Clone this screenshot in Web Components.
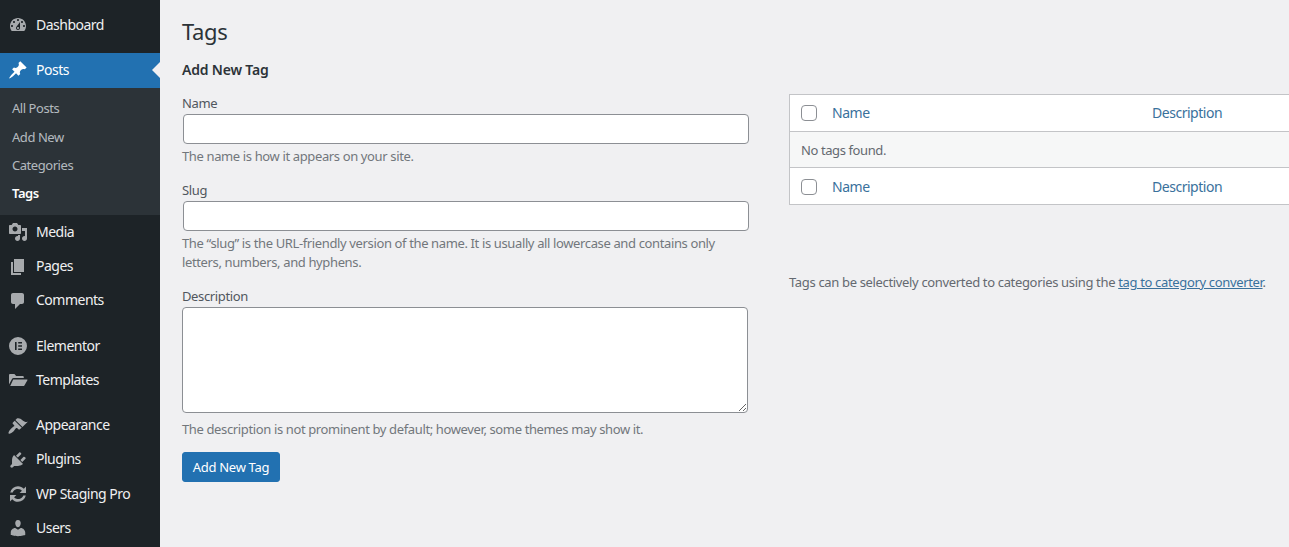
<!DOCTYPE html>
<html>
<head>
<meta charset="utf-8">
<title>Tags</title>
<style>
html, body { margin: 0; height: 100%; overflow: hidden; background: #f0f0f2; }
body { font-family: "Noto Sans", "Open Sans", sans-serif; font-size: 13px; color: #3c434a; }
#wrap { display: flex; height: 547px; overflow: hidden; }
</style>
</head>
<body>
<div id="wrap">
  <wp-sidebar>
    <wp-menu-item icon="dashboard">Dashboard</wp-menu-item>
    <wp-menu-sep></wp-menu-sep>
    <wp-menu-item icon="post" current>Posts</wp-menu-item>
    <wp-submenu>
      <wp-sub-item>All Posts</wp-sub-item>
      <wp-sub-item>Add New</wp-sub-item>
      <wp-sub-item>Categories</wp-sub-item>
      <wp-sub-item current>Tags</wp-sub-item>
    </wp-submenu>
    <wp-menu-item icon="media">Media</wp-menu-item>
    <wp-menu-item icon="page">Pages</wp-menu-item>
    <wp-menu-item icon="comments">Comments</wp-menu-item>
    <wp-menu-sep></wp-menu-sep>
    <wp-menu-item icon="elementor">Elementor</wp-menu-item>
    <wp-menu-item icon="folder">Templates</wp-menu-item>
    <wp-menu-sep></wp-menu-sep>
    <wp-menu-item icon="appearance">Appearance</wp-menu-item>
    <wp-menu-item icon="plugins">Plugins</wp-menu-item>
    <wp-menu-item icon="sync">WP Staging Pro</wp-menu-item>
    <wp-menu-item icon="users">Users</wp-menu-item>
  </wp-sidebar>
  <wp-tags-page>
    <wp-tag-form slot="form"></wp-tag-form>
    <wp-tag-table slot="table"></wp-tag-table>
  </wp-tags-page>
</div>
<script>
const ICONS = {
  dashboard: '<path d="M3.76 16h12.48c1.1-1.37 1.76-3.11 1.76-5 0-4.42-3.58-8-8-8s-8 3.58-8 8c0 1.89.66 3.63 1.76 5zM10 4c.55 0 1 .45 1 1s-.45 1-1 1-1-.45-1-1 .45-1 1-1zM6 6c.55 0 1 .45 1 1s-.45 1-1 1-1-.45-1-1 .45-1 1-1zm8 0c.55 0 1 .45 1 1s-.45 1-1 1-1-.45-1-1 .45-1 1-1zm-5.37 5.55L12 7v6c0 1.1-.9 2-2 2s-2-.9-2-2c0-.57.24-1.08.63-1.45zM4 10c.55 0 1 .45 1 1s-.45 1-1 1-1-.45-1-1 .45-1 1-1zm12 0c.55 0 1 .45 1 1s-.45 1-1 1-1-.45-1-1 .45-1 1-1zm-5 3c0-.55-.45-1-1-1s-1 .45-1 1 .45 1 1 1 1-.45 1-1z"/>',
  post: '<path d="M10.44 3.02l1.82-1.82 6.36 6.35-1.83 1.82c-1.05-.68-2.48-.57-3.41.36l-.75.75c-.92.93-1.04 2.35-.35 3.41l-1.83 1.82-2.41-2.41-2.8 2.79c-.42.42-3.38 2.71-3.8 2.29s1.86-3.39 2.28-3.81l2.79-2.79L4.1 9.36l1.83-1.82c1.05.69 2.48.57 3.4-.36l.75-.75c.93-.92 1.05-2.35.36-3.41z"/>',
  media: '<path d="M13 11V4c0-.55-.45-1-1-1h-1.67L9 1H5L3.67 3H2c-.55 0-1 .45-1 1v7c0 .55.45 1 1 1h10c.55 0 1-.45 1-1zM7 4.5c1.38 0 2.5 1.12 2.5 2.5S8.38 9.5 7 9.5 4.5 8.38 4.5 7 5.62 4.5 7 4.5zM14 6h5v10.5c0 1.38-1.12 2.5-2.5 2.5S14 17.88 14 16.5s1.12-2.5 2.5-2.5c.17 0 .34.02.5.05V9h-3V6zm-4 8.05V13h2v3.5c0 1.38-1.12 2.5-2.5 2.5S7 17.88 7 16.5 8.12 14 9.5 14c.17 0 .34.02.5.05z"/>',
  page: '<path d="M6 15V2h10v13H6zm-1 1h8v2H3V5h2v11z"/>',
  comments: '<path d="M5 2h9c1.1 0 2 .9 2 2v7c0 1.1-.9 2-2 2h-2l-5 5v-5H5c-1.1 0-2-.9-2-2V4c0-1.1.9-2 2-2z"/>',
  elementor: '<path fill-rule="evenodd" d="M10 1a9 9 0 1 0 0 18 9 9 0 0 0 0-18zM7 6h1.6v8H7V6zm3.2 0H14v1.6h-3.8V6zm0 3.2H14v1.6h-3.8V9.2zm0 3.2H14V14h-3.8v-1.6z"/>',
  folder: '<path d="M1 5.2C1 4.5 1.5 4 2.2 4h4.2l1.8 2h6.4c.7 0 1.2.5 1.2 1.2V8H5.6c-.7 0-1.3.4-1.6 1L1 14.6V5.2z"/><path d="M5.2 9.4H19c.4 0 .6.4.4.8l-3 5.2c-.2.4-.6.6-1 .6H2.2l3-6.6z"/>',
  appearance: '<path d="M14.48 11.06L7.41 3.99l1.5-1.5c.5-.56 2.3-.47 3.51.32 1.21.8 1.43 1.28 2.91 2.1 1.18.64 2.45 1.26 4.45.85zm-.71.71L6.7 4.7 4.93 6.47c-.39.39-.39 1.02 0 1.41l1.06 1.06c.39.39.39 1.03 0 1.42-.6.6-1.43 1.11-2.21 1.69-.35.26-.7.53-1.01.84-1.43 1.43-2.87 3.93-2.09 4.7.78.78 3.27-.66 4.7-2.09.31-.31.58-.66.84-1.01.58-.78 1.09-1.61 1.69-2.21.39-.39 1.03-.39 1.42 0l1.06 1.06c.39.39 1.02.39 1.41 0z"/>',
  plugins: '<path d="M13.11 4.36L9.87 7.6 8 5.73l3.24-3.24c.35-.34 1.05-.2 1.56.32.52.51.66 1.21.31 1.55zm-8 1.77l.91-1.12 9.01 9.01-1.19.84c-.71.71-2.63 1.16-3.82 1.16H6.14L4.9 17.26c-.59.59-1.54.59-2.12 0-.59-.58-.59-1.53 0-2.12l1.24-1.24v-3.88c0-1.13.4-3.19 1.09-3.89zm7.26 3.97l3.24-3.24c.34-.35 1.04-.21 1.55.31.52.51.66 1.21.31 1.55l-3.24 3.25z"/>',
  sync: '<path d="M10 2.2c2.3 0 4.4 1 5.8 2.6L18 2.6V9h-6.4l2.3-2.3A5.5 5.5 0 0 0 4.7 8.6H2.2A8 8 0 0 1 10 2.2z"/><path d="M10 17.8c-2.3 0-4.4-1-5.8-2.6L2 17.4V11h6.4l-2.3 2.3a5.5 5.5 0 0 0 9.2-1.9h2.5A8 8 0 0 1 10 17.8z"/>',
  users: '<path d="M10 9.25c-2.27 0-2.73-3.44-2.73-3.44C7 4.02 7.82 2 9.97 2c2.16 0 2.98 2.02 2.71 3.81 0 0-.41 3.44-2.68 3.44zm0 2.57L12.72 10c2.39 0 4.52 2.33 4.52 4.53v2.49s-3.65 1.13-7.24 1.13c-3.65 0-7.24-1.13-7.24-1.13v-2.49c0-2.25 1.94-4.48 4.47-4.48z"/>'
};

////////////////////////////
// helper
////////////////////////////

class ShadowEl extends HTMLElement {
  constructor() {
    super();
    this.attachShadow({ mode: 'open' });
    this.shadowRoot.innerHTML = this.render();
  }
  render() { return '<slot></slot>'; }
}

////////////////////////////
// sidebar
////////////////////////////

class WpSidebar extends ShadowEl {
  render() {
    return `<style>:host{display:block;flex:0 0 160px;width:160px;height:547px;background:#1d2327;padding-top:8px;box-sizing:border-box;overflow:hidden}</style><slot></slot>`;
  }
}

class WpMenuSep extends ShadowEl {
  render() { return `<style>:host{display:block;height:11px}</style>`; }
}

class WpMenuItem extends ShadowEl {
  render() {
    const cur = this.hasAttribute('current');
    return `<style>
      :host{display:flex;align-items:center;height:34.25px;position:relative;font-size:14px;color:${cur ? '#fff' : '#f0f0f1'};background:${cur ? '#2271b1' : 'transparent'}}
      svg{width:20px;height:20px;margin-left:8px;fill:${cur ? '#fff' : '#a7aaad'};flex:none}
      .label{margin-left:8px;padding-bottom:2px;letter-spacing:-.5px;white-space:nowrap}
      .arrow{position:absolute;right:0;top:50%;margin-top:-8px;border:8px solid transparent;border-right-color:#f0f0f2;border-left-width:0}
    </style>
    <svg viewBox="0 0 20 20">${ICONS[this.getAttribute('icon')] || ''}</svg>
    <span class="label"><slot></slot></span>${cur ? '<span class="arrow"></span>' : ''}`;
  }
}

class WpSubmenu extends ShadowEl {
  render() {
    return `<style>:host{display:block;background:#2c3338;padding:6.5px 0 6px;height:127.8px;box-sizing:border-box}</style><slot></slot>`;
  }
}

class WpSubItem extends ShadowEl {
  render() {
    const cur = this.hasAttribute('current');
    return `<style>:host{display:flex;align-items:center;height:28.4px;padding-left:12px;font-size:13px;letter-spacing:-.45px;color:${cur ? '#fff' : 'rgba(240,246,252,.7)'};font-weight:${cur ? 600 : 400}}</style><slot></slot>`;
  }
}

////////////////////////////
// content
////////////////////////////

class WpTagsPage extends ShadowEl {
  render() {
    return `<style>
      :host{display:block;flex:1 1 auto;min-width:0;padding-left:22px;box-sizing:border-box}
      h1{margin:0;padding-top:15px;font-size:22px;font-weight:400;line-height:32px;color:#2c3338;letter-spacing:-.4px}
      .cols{display:flex}
      .left{flex:0 0 567px;width:567px}
      .right{flex:0 0 520px;margin-left:40px;padding-top:47px}
      .note{margin:68px 0 0;font-size:13px;line-height:19px;color:#646970;letter-spacing:-.34px;white-space:nowrap}
      a{color:#3a719c}
    </style>
    <h1>Tags</h1>
    <div class="cols">
      <div class="left"><slot name="form"></slot></div>
      <div class="right">
        <slot name="table"></slot>
        <p class="note">Tags can be selectively converted to categories using the <a href="#">tag to category converter</a>.</p>
      </div>
    </div>`;
  }
}

class WpField extends ShadowEl {
  render() {
    const area = this.hasAttribute('area');
    const ind = area ? 0 : 1;
    return `<style>
      :host{display:block;font-size:13px;letter-spacing:-.37px}
      label{display:block;line-height:19px;color:#50575e}
      .box{display:block;box-sizing:border-box;width:566px;margin-left:${ind}px;height:${area ? 106 : 30}px;background:#fff;border:1px solid #8c8f94;border-radius:4px;margin-top:1px;padding:0 8px;outline:none;font:inherit}
      textarea.box{resize:vertical}
      p{margin:${area ? 7 : 3}px 0 0;line-height:19px;color:#72777c}
    </style>
    <label>${this.getAttribute('label')}</label>
    ${area ? '<textarea class="box"></textarea>' : '<input class="box" type="text">'}
    <p><slot></slot></p>`;
  }
}

class WpTagForm extends ShadowEl {
  render() {
    return `<style>
      :host{display:block}
      h2{margin:13px 0 0;font-size:14px;line-height:20px;font-weight:600;color:#2c3338;letter-spacing:-.2px}
      .first{margin-top:14px}
      .second,.third{margin-top:15px}
      button{display:block;margin-top:13px;width:98px;height:30px;padding:0;background:#2271b1;border:1px solid #2271b1;border-radius:3px;color:#fff;font:inherit;font-size:13px;letter-spacing:-.3px}
    </style>
    <h2>Add New Tag</h2>
    <wp-field class="first" label="Name">The name is how it appears on your site.</wp-field>
    <wp-field class="second" label="Slug">The “slug” is the URL-friendly version of the name. It is usually all lowercase and contains only letters, numbers, and hyphens.</wp-field>
    <wp-field class="third" area label="Description">The description is not prominent by default; however, some themes may show it.</wp-field>
    <button>Add New Tag</button>`;
  }
}

class WpTagTable extends ShadowEl {
  render() {
    const head = (cls) => `<div class="row ${cls}"><span class="check"></span><a class="name">Name</a><a>Description</a></div>`;
    return `<style>
      :host{display:block;width:520px;background:#fff;border:1px solid #c3c4c7;box-sizing:border-box;font-size:14px;letter-spacing:-.47px}
      .row{display:flex;align-items:center;height:36px}
      .top{border-bottom:1px solid #c3c4c7}
      .top a{padding-bottom:1px}
      .bottom{border-top:1px solid #c3c4c7;box-sizing:border-box;height:37px;padding-top:1px}
      .empty{background:#f6f7f7;height:35px;padding-left:11px;font-size:13px;letter-spacing:-.4px;color:#646970}
      .check{box-sizing:border-box;width:16px;height:16px;margin-left:11px;background:#fff;border:1px solid #8c8f94;border-radius:4px;flex:none}
      a{color:#3a719c}
      .name{margin-left:15px;width:320px;flex:none}
    </style>
    ${head('top')}
    <div class="row empty">No tags found.</div>
    ${head('bottom')}`;
  }
}

customElements.define('wp-sidebar', WpSidebar);
customElements.define('wp-menu-sep', WpMenuSep);
customElements.define('wp-menu-item', WpMenuItem);
customElements.define('wp-submenu', WpSubmenu);
customElements.define('wp-sub-item', WpSubItem);
customElements.define('wp-tags-page', WpTagsPage);
customElements.define('wp-field', WpField);
customElements.define('wp-tag-form', WpTagForm);
customElements.define('wp-tag-table', WpTagTable);
</script>
</body>
</html>
